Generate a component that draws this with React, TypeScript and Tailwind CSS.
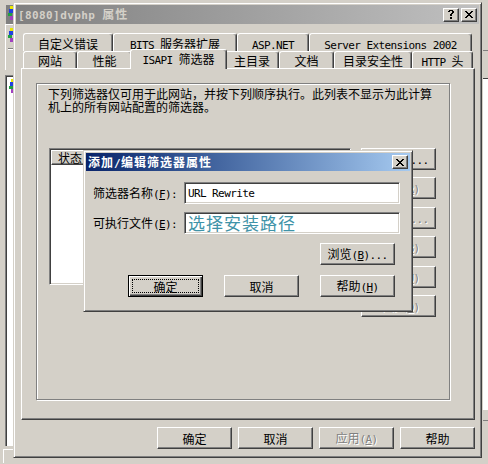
import React from "react";

type P = { children?: React.ReactNode; className?: string };

const RAISED =
  "border border-t-white border-l-white border-r-[#404040] border-b-[#404040] shadow-[inset_-1px_-1px_0_#808080]";
const SUNKEN =
  "border border-t-[#808080] border-l-[#808080] border-r-white border-b-white shadow-[inset_1px_1px_0_#404040,inset_-1px_-1px_0_#d4d0c8]";
const WINFRAME =
  "border border-t-[#d4d0c8] border-l-[#d4d0c8] border-r-[#404040] border-b-[#404040] shadow-[inset_1px_1px_0_#fff,inset_-1px_-1px_0_#808080]";

function M({ children, className = "" }: P) {
  return (
    <span className={`font-['DejaVu_Sans_Mono',monospace] text-[11px] tracking-[-0.6px] ${className}`}>
      {children}
    </span>
  );
}

function MB({ children, className = "" }: P) {
  return (
    <span className={`font-['DejaVu_Sans_Mono',monospace] font-bold text-[11px] tracking-[0.4px] ${className}`}>
      {children}
    </span>
  );
}

function U({ children }: P) {
  return <span className="underline underline-offset-[1px]">{children}</span>;
}

function CloseGlyph() {
  return (
    <svg width="8" height="7" viewBox="0 0 8 7" shapeRendering="crispEdges">
      <path
        d="M0 0h2v1H0zM6 0h2v1H6zM1 1h2v1H1zM5 1h2v1H5zM2 2h4v1H2zM3 3h2v1H3zM2 4h4v1H2zM1 5h2v1H1zM5 5h2v1H5zM0 6h2v1H0zM6 6h2v1H6z"
        fill="#000"
      />
    </svg>
  );
}

function HelpGlyph() {
  return (
    <svg width="6" height="9" viewBox="0 0 6 9" shapeRendering="crispEdges">
      <path
        d="M1 0h4v1H1zM0 1h2v1H0zM4 1h2v1H4zM4 2h2v1H4zM3 3h2v1H3zM2 4h2v1H2zM2 5h2v1H2zM2 7h2v1H2zM2 8h2v1H2z"
        fill="#000"
      />
    </svg>
  );
}

function TitleBtn({ children }: P) {
  return (
    <div className={`w-[16px] h-[14px] flex items-center justify-center bg-[#d4d0c8] ${RAISED}`}>{children}</div>
  );
}

function Btn({
  children,
  className = "",
  disabled = false,
  isDefault = false,
}: P & { disabled?: boolean; isDefault?: boolean }) {
  const frame = isDefault
    ? "border border-black shadow-[inset_1px_1px_0_#fff,inset_-1px_-1px_0_#404040,inset_-2px_-2px_0_#808080]"
    : RAISED;
  return (
    <div
      className={`relative shrink-0 flex items-center justify-center bg-[#d4d0c8] whitespace-nowrap ${frame} ${
        disabled ? "text-[#808080] [text-shadow:1px_1px_0_#fff]" : "text-black"
      } ${className}`}
    >
      {isDefault && <div className="absolute inset-[3px] border border-dotted border-black" />}
      <span>{children}</span>
    </div>
  );
}

function Tab({ children, className = "", selected = false }: P & { selected?: boolean }) {
  return (
    <div
      className={`shrink-0 flex justify-center bg-[#d4d0c8] whitespace-nowrap border-t border-l border-r border-t-white border-l-white border-r-[#404040] rounded-t-[3px] shadow-[inset_-1px_0_0_#808080] ${
        selected ? "relative z-10 -mx-[2px] -mt-[2px] h-[20px]" : "h-full"
      } ${className}`}
    >
      <span>{children}</span>
    </div>
  );
}

function TinyIcon() {
  return (
    <svg width="6" height="14" viewBox="0 0 6 14" shapeRendering="crispEdges">
      <rect x="2" y="0" width="3" height="3" fill="#e8e800" />
      <rect x="1" y="3" width="4" height="4" fill="#2040e0" />
      <rect x="0" y="7" width="4" height="3" fill="#20a040" />
      <rect x="2" y="10" width="3" height="4" fill="#a040c0" />
    </svg>
  );
}

export default function App() {
  return (
    <div className="relative w-[488px] h-[464px] overflow-hidden bg-[#d4d0c8] text-black text-[12px] leading-[13px] font-['Noto_Sans_CJK_SC',sans-serif]">
      {/* background windows (left) */}
      <div className="absolute left-[6px] top-[5px] w-[8px] h-[20px] bg-[#808080] pl-[2px] pt-[1px]">
        <TinyIcon />
      </div>
      <div className="absolute left-[5px] top-[24px] w-[9px] h-[46px] border-t border-l border-white pl-[2px] pt-[3px]">
        <TinyIcon />
        <div className="mt-[6px] border-t border-[#808080] shadow-[0_1px_0_#fff]" />
      </div>
      <div className="absolute left-[5px] top-[75px] w-[9px] h-[371px] bg-white border-t border-l border-[#808080] shadow-[inset_1px_1px_0_#404040] pl-[3px] pt-[3px]">
        <TinyIcon />
      </div>
      <div className="absolute left-[3px] top-[449px] w-[11px] h-[14px] border-t border-l border-white" />
      {/* background windows (right) */}
      <div className="absolute left-[483px] top-[50px] w-[5px] border-t border-[#808080]" />
      <div className="absolute left-[483px] top-[78px] w-[5px] h-[332px] bg-white border-t border-[#404040]" />
      <div className="absolute left-[483px] top-[420px] w-[5px] border-t border-[#808080]" />

      {/* main property window */}
      <div className={`absolute left-[13px] top-[2px] w-[469px] h-[456px] bg-[#d4d0c8] p-[2px] flex flex-col ${WINFRAME}`}>
        <div className="h-[19px] shrink-0 flex items-center px-[2px] bg-linear-to-r from-[#808080] to-[#c0c0c0]">
          <span className="font-bold text-[#d4d0c8] whitespace-nowrap">
            <MB>[8080]dvphp </MB>
            <span className="tracking-[1px]">属性</span>
          </span>
          <div className="ml-auto flex gap-[2px]">
            <TitleBtn>
              <HelpGlyph />
            </TitleBtn>
            <TitleBtn>
              <CloseGlyph />
            </TitleBtn>
          </div>
        </div>

        <div className="flex flex-col pl-[5px] pr-[4px] pt-[9px]">
          {/* tab row 1 */}
          <div className="flex h-[18px] ml-[2px]">
            <Tab className="w-[90px] pt-[3px]">自定义错误</Tab>
            <Tab className="w-[124px] pt-[3px]">
              <M>BITS </M>服务器扩展
            </Tab>
            <Tab className="w-[72px] pt-[3px]">
              <M>ASP.NET</M>
            </Tab>
            <Tab className="w-[163px] pt-[3px]">
              <M>Server Extensions 2002</M>
            </Tab>
          </div>
          {/* tab row 2 */}
          <div className="relative z-10 flex h-[17px] ml-[2px]">
            <Tab className="w-[54px] pt-[2px]">网站</Tab>
            <Tab className="w-[55px] pt-[2px]">性能</Tab>
            <Tab className="w-[97px] pt-[2px]" selected>
              <M>ISAPI </M>筛选器
            </Tab>
            <Tab className="w-[54px] pt-[2px]">主目录</Tab>
            <Tab className="w-[55px] pt-[2px]">文档</Tab>
            <Tab className="w-[78px] pt-[2px]">目录安全性</Tab>
            <Tab className="w-[61px] pt-[2px]">
              <M>HTTP </M>头
            </Tab>
          </div>

          {/* tab panel */}
          <div className="h-[352px] bg-[#d4d0c8] border border-t-white border-l-white border-r-[#404040] border-b-[#404040] shadow-[inset_-1px_-1px_0_#808080] pl-[14px] pt-[14px]">
            <div className="w-[414px] h-[317px] border border-[#808080] shadow-[inset_1px_1px_0_#fff,1px_1px_0_#fff] flex flex-col pl-[11px] pt-[3px]">
              <p className="whitespace-nowrap">
                下列筛选器仅可用于此网站，并按下列顺序执行。此列表不显示为此计算
                <br />
                机上的所有网站配置的筛选器。
              </p>
              <div className="flex gap-[10px] mt-[35px] ml-[1px]">
                <div className={`w-[302px] h-[137px] bg-white p-[1px] ${SUNKEN}`}>
                  <div className="flex h-[15px]">
                    <div className={`w-[60px] h-full bg-[#d4d0c8] flex items-center pl-[6px] ${RAISED}`}>状态</div>
                    <div className={`flex-1 h-full bg-[#d4d0c8] ${RAISED}`} />
                  </div>
                </div>
                <div className="flex flex-col">
                  <Btn className="w-[75px] h-[22px]">
                    添加<M>(<U>D</U>)...</M>
                  </Btn>
                  <Btn className="w-[75px] h-[22px] mt-[7px]" disabled>
                    删除<M>(<U>R</U>)</M>
                  </Btn>
                  <Btn className="w-[75px] h-[22px] mt-[8px]" disabled>
                    编辑<M>(<U>E</U>)...</M>
                  </Btn>
                  <Btn className="w-[75px] h-[22px] mt-[7px]" disabled>
                    禁用<M>(<U>B</U>)</M>
                  </Btn>
                  <Btn className="w-[75px] h-[22px] mt-[8px]" disabled>
                    上移<M>(<U>U</U>)</M>
                  </Btn>
                  <Btn className="w-[75px] h-[22px] mt-[7px]" disabled>
                    下移<M>(<U>O</U>)</M>
                  </Btn>
                </div>
              </div>
            </div>
          </div>

          {/* bottom buttons */}
          <div className="flex justify-end gap-[6px] mt-[7px]">
            <Btn className="w-[75px] h-[22px]">确定</Btn>
            <Btn className="w-[75px] h-[22px]">取消</Btn>
            <Btn className="w-[75px] h-[22px]" disabled>
              应用<M>(<U>A</U>)</M>
            </Btn>
            <Btn className="w-[75px] h-[22px]">帮助</Btn>
          </div>
        </div>
      </div>

      {/* add/edit filter dialog (overlay) */}
      <div className={`absolute left-[83px] top-[150px] w-[330px] h-[162px] bg-[#d4d0c8] p-[2px] flex flex-col ${WINFRAME}`}>
        <div className="h-[18px] shrink-0 flex items-center px-[2px] bg-linear-to-r from-[#0a246a] to-[#a6caf0]">
          <span className="font-bold text-white whitespace-nowrap tracking-[1px]">
            添加<MB>/</MB>编辑筛选器属性
          </span>
          <div className="ml-auto">
            <TitleBtn>
              <CloseGlyph />
            </TitleBtn>
          </div>
        </div>
        <div className="flex flex-col pl-[7px] pr-[9px]">
          <div className="flex items-center mt-[11px]">
            <div className="w-[91px] shrink-0 whitespace-nowrap">
              筛选器名称<M>(<U>F</U>):</M>
            </div>
            <div className={`w-[216px] h-[22px] shrink-0 bg-white flex items-center pl-[3px] ${SUNKEN}`}>
              <M>URL Rewrite</M>
            </div>
          </div>
          <div className="flex items-center mt-[8px]">
            <div className="w-[91px] shrink-0 whitespace-nowrap">
              可执行文件<M>(<U>E</U>):</M>
            </div>
            <div className={`w-[216px] h-[22px] shrink-0 bg-white flex items-center pl-[3px] ${SUNKEN}`}>
              <span className="text-[17px] leading-[18px] tracking-[1px] text-[#3f93a8]">选择安装路径</span>
            </div>
          </div>
          <div className="flex justify-end pr-[6px] mt-[9px]">
            <Btn className="w-[75px] h-[22px]">
              浏览<M>(<U>B</U>)...</M>
            </Btn>
          </div>
          <div className="flex justify-end gap-[21px] pr-[6px] mt-[10px]">
            <Btn className="w-[75px] h-[22px]" isDefault>
              确定
            </Btn>
            <Btn className="w-[75px] h-[22px]">取消</Btn>
            <Btn className="w-[75px] h-[22px]">
              帮助<M>(<U>H</U>)</M>
            </Btn>
          </div>
        </div>
      </div>
    </div>
  );
}
